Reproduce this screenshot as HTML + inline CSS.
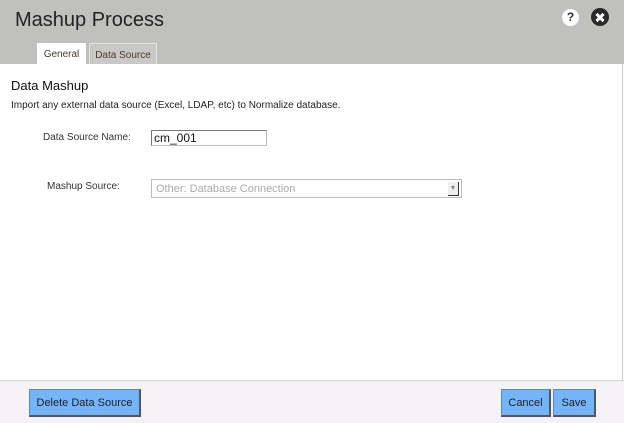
<!DOCTYPE html>
<html><head><style>
*{margin:0;padding:0;box-sizing:border-box}
body{width:624px;height:423px;overflow:hidden;background:#fff;font-family:"Liberation Sans",Arial,sans-serif;position:relative}
.hdr{position:absolute;left:0;top:0;width:624px;height:64px;background:#c0c1bf}
.title{position:absolute;left:15px;top:9px;font-size:20px;color:#222}
.tab{position:absolute;top:43px;height:21px;font-size:10px;text-align:center;line-height:24px;color:#4a3a2a}
.t1{left:37px;width:49px;background:#fff}
.t2{left:89px;width:68px;background:#c8c8c6;border:1px solid #e2e2e2;border-bottom:none}
.help{position:absolute;left:562px;top:9px;width:17px;height:17px;border-radius:50%;background:#fff;color:#333;font-size:12px;font-weight:bold;text-align:center;line-height:17px}
.close{position:absolute;left:591px;top:8px;width:18px;height:18px;border-radius:50%;background:#2a2a2a}
.close:before,.close:after{content:"";position:absolute;left:4px;top:7.5px;width:10px;height:3px;background:#fff;transform:rotate(45deg)}
.close:after{transform:rotate(-45deg)}
h2{position:absolute;left:11px;top:78px;font-size:13px;font-weight:normal;color:#111}
.desc{position:absolute;left:11px;top:100px;font-size:10px;color:#222}
.lbl{position:absolute;font-size:10px;color:#333}
.inp{position:absolute;left:151px;top:130px;width:116px;height:16px;border:1px solid #bbb;border-top-color:#777;border-left-color:#777;font-size:12px;padding-left:2px;line-height:14px;color:#111}
.sel{position:absolute;left:151px;top:179px;width:311px;height:19px;border:1px solid #bbb;font-size:11px;color:#aaa;padding-left:4px;line-height:18px}
.arr{position:absolute;right:2px;top:2px;width:11px;height:14px;background:#eee;border-right:1px solid #333;border-bottom:1px solid #333;font-size:7px;color:#888;text-align:center;line-height:14px}
.ftr{position:absolute;left:0;top:380px;width:624px;height:43px;background:#f5f2f5;border-top:1px solid #d8d4d8}
.vr{position:absolute;left:622px;top:64px;width:1px;height:359px;background:#ccc}
.btn{position:absolute;top:389px;height:28px;background:#74b4fb;border:1px solid #5a8ac0;border-right:2px solid #555;border-bottom:2px solid #555;font-size:11px;color:#222;text-align:center;line-height:26px}
</style></head><body>
<div class="hdr"></div>
<div class="title">Mashup Process</div>
<div class="tab t1">General</div>
<div class="tab t2">Data Source</div>
<div class="help">?</div>
<div class="close"></div>
<h2>Data Mashup</h2>
<div class="desc">Import any external data source (Excel, LDAP, etc) to Normalize database.</div>
<div class="lbl" style="left:43px;top:132px">Data Source Name:</div>
<div class="inp">cm_001</div>
<div class="lbl" style="left:47px;top:181px">Mashup Source:</div>
<div class="sel">Other: Database Connection<div class="arr">▼</div></div>
<div class="vr"></div>
<div class="ftr"></div>
<div class="btn" style="left:29px;width:112px">Delete Data Source</div>
<div class="btn" style="left:501px;width:50px">Cancel</div>
<div class="btn" style="left:553px;width:43px">Save</div>
</body></html>
